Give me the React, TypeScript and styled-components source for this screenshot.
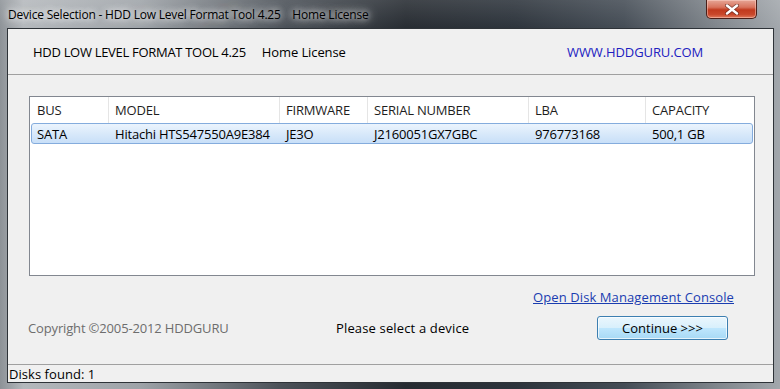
import styled, { createGlobalStyle } from 'styled-components';

const GlobalStyle = createGlobalStyle`
	html,
	body {
		margin: 0;
		padding: 0;
		background: #1d2227;
	}

	body {
		font-family: 'Open Sans', 'Noto Sans', sans-serif;
		font-size: 13px;
	}
`;

interface Column {
	key: string;
	title: string;
	width: number;
}

const columns: Column[] = [
	{ key: 'bus', title: 'BUS', width: 78 },
	{ key: 'model', title: 'MODEL', width: 171 },
	{ key: 'firmware', title: 'FIRMWARE', width: 88 },
	{ key: 'serial', title: 'SERIAL NUMBER', width: 161 },
	{ key: 'lba', title: 'LBA', width: 117 },
	{ key: 'capacity', title: 'CAPACITY', width: 108 },
];

const devices = [
	{
		bus: 'SATA',
		model: 'Hitachi HTS547550A9E384',
		firmware: 'JE3O',
		serial: 'J2160051GX7GBC',
		lba: '976773168',
		capacity: '500,1 GB',
	},
];

const gridColumns = columns.map((c) => `${c.width}px`).join(' ');

function CloseIcon() {
	return (
		<svg width="14" height="11" viewBox="0 0 14 11">
			<path
				d="M2 1.5 L12 9.5 M12 1.5 L2 9.5"
				stroke="#3a1410"
				strokeWidth="4"
				strokeLinecap="round"
				opacity="0.55"
			/>
			<path d="M2 1.5 L12 9.5 M12 1.5 L2 9.5" stroke="#fff" strokeWidth="2.4" strokeLinecap="round" />
		</svg>
	);
}

function App() {
	return (
		<>
			<GlobalStyle />
			<Window>
				<TitleBar>
					<TitleText>Device Selection - HDD Low Level Format Tool 4.25&nbsp;&nbsp;&nbsp;&nbsp;Home License</TitleText>
					<CloseButton aria-label="Close">
						<CloseIcon />
					</CloseButton>
				</TitleBar>

				<Client>
					<Header>
						<ProductName>
							HDD LOW LEVEL FORMAT TOOL 4.25
							<License>Home License</License>
						</ProductName>
						<SiteLink>WWW.HDDGURU.COM</SiteLink>
					</Header>

					<Content>
						<ListView>
							<ListHeader>
								{columns.map((c) => (
									<HeaderCell key={c.key}>{c.title}</HeaderCell>
								))}
							</ListHeader>
							{devices.map((d) => (
								<ListRow key={d.serial} $selected>
									{columns.map((c) => (
										<Cell key={c.key}>{d[c.key as keyof typeof d]}</Cell>
									))}
								</ListRow>
							))}
						</ListView>

						<LinkRow>
							<ConsoleLink>Open Disk Management Console</ConsoleLink>
						</LinkRow>

						<ActionRow>
							<Copyright>Copyright ©2005-2012 HDDGURU</Copyright>
							<Message>Please select a device</Message>
							<ContinueButton>Continue &gt;&gt;&gt;</ContinueButton>
						</ActionRow>
					</Content>

					<StatusBar>Disks found: 1</StatusBar>
				</Client>
			</Window>
		</>
	);
}

export default App;

const Window = styled.div`
	width: 780px;
	height: 389px;
	box-sizing: border-box;
	display: flex;
	flex-direction: column;
	padding: 0 6px 6px 7px;
	background:
		linear-gradient(180deg, rgba(255, 255, 255, 0.12) 0%, rgba(255, 255, 255, 0) 30px),
		linear-gradient(
			90deg,
			#8d9297 0%,
			#b4b8bc 3%,
			#9ea3a8 18%,
			#4b5158 36%,
			#262b31 52%,
			#2c333b 66%,
			#444c55 80%,
			#80868c 92%,
			#a2a7ac 100%
		);
`;

const TitleBar = styled.div`
	height: 28px;
	flex: none;
	display: flex;
	align-items: flex-start;
	justify-content: space-between;
`;

const TitleText = styled.div`
	margin: 6px 0 0 1px;
	font-size: 12px;
	letter-spacing: -0.2px;
	color: #000;
	white-space: nowrap;
	text-shadow:
		0 0 6px rgba(255, 255, 255, 0.9),
		0 0 10px rgba(255, 255, 255, 0.7),
		0 0 14px rgba(255, 255, 255, 0.5);
`;

const CloseButton = styled.div`
	width: 51px;
	height: 19px;
	margin-right: 17px;
	box-sizing: border-box;
	display: flex;
	align-items: center;
	justify-content: center;
	border: 1px solid #4a1f18;
	border-top: none;
	border-radius: 0 0 5px 5px;
	background: linear-gradient(180deg, #e6a696 0%, #d8735d 40%, #c13a1e 55%, #c9472a 80%, #e07a5c 100%);
	box-shadow: inset 0 0 0 1px rgba(255, 220, 210, 0.45);
`;

const Client = styled.div`
	flex: 1;
	display: flex;
	flex-direction: column;
	box-sizing: border-box;
	background: #f0f0f0;
	border: 1px solid #2e3338;
	color: #000;
`;

const Header = styled.div`
	height: 45px;
	flex: none;
	display: flex;
	align-items: center;
	padding-left: 25px;
	border-bottom: 1px solid #a0a0a0;
`;

const ProductName = styled.div`
	width: 534px;
	letter-spacing: -0.3px;
	white-space: nowrap;
`;

const License = styled.span`
	margin-left: 16px;
	letter-spacing: -0.1px;
`;

const SiteLink = styled.div`
	color: #2020c0;
	letter-spacing: -0.1px;
`;

const Content = styled.div`
	flex: 1;
	display: flex;
	flex-direction: column;
	padding: 21px 18px 0 21px;
`;

const ListView = styled.div`
	height: 180px;
	box-sizing: border-box;
	background: #fff;
	border: 1px solid #828790;
	padding: 0 1px;
`;

const ListHeader = styled.div`
	display: grid;
	grid-template-columns: ${gridColumns};
	height: 26px;
`;

const HeaderCell = styled.div`
	display: flex;
	align-items: center;
	padding-left: 6px;
	border-right: 1px solid #e5e5e5;
	color: #1e1e1e;
	letter-spacing: -0.2px;
	white-space: nowrap;

	&:last-child {
		border-right: none;
	}
`;

const ListRow = styled.div<{ $selected?: boolean }>`
	display: grid;
	grid-template-columns: ${gridColumns};
	height: 21px;
	box-sizing: border-box;
	border: 1px solid ${({ $selected }) => ($selected ? '#84acdd' : 'transparent')};
	border-radius: 3px;
	background: ${({ $selected }) =>
		$selected ? 'linear-gradient(180deg, #ebf4fd 0%, #d7e8fa 55%, #c8dff8 100%)' : 'transparent'};
`;

const Cell = styled.div`
	display: flex;
	align-items: center;
	padding-left: 5px;
	letter-spacing: -0.2px;
	white-space: nowrap;
`;

const LinkRow = styled.div`
	display: flex;
	justify-content: flex-end;
	padding: 12px 21px 0 0;
	height: 18px;
`;

const ConsoleLink = styled.a`
	color: #1a3db0;
	text-decoration: underline;
	letter-spacing: 0.1px;
	cursor: pointer;
`;

const ActionRow = styled.div`
	display: grid;
	grid-template-columns: 308px 261px 131px;
	align-items: center;
	margin: 10px 0 0 -1px;
`;

const Copyright = styled.div`
	color: #6d6d6d;
	letter-spacing: -0.15px;
	white-space: nowrap;
`;

const Message = styled.div`
	letter-spacing: 0.15px;
	white-space: nowrap;
`;

const ContinueButton = styled.button`
	height: 24px;
	font-family: inherit;
	font-size: 13px;
	color: #000;
	border: 1px solid #3c7fb1;
	border-radius: 3px;
	background: linear-gradient(180deg, #eaf6fd 0%, #d9f0fc 48%, #bee6fd 52%, #a7d9f5 100%);
	box-shadow: inset 0 0 0 1px rgba(255, 255, 255, 0.7);
	padding: 0;
`;

const StatusBar = styled.div`
	height: 17px;
	flex: none;
	margin-top: auto;
	display: flex;
	align-items: center;
	padding-left: 1px;
	border-top: 1px solid #a0a0a0;
	letter-spacing: 0.05px;
`;
